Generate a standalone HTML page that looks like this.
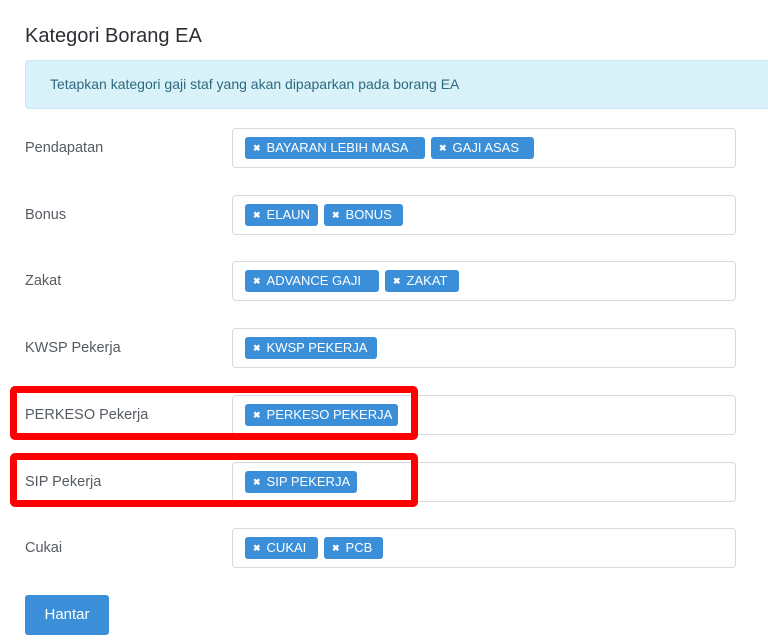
<!DOCTYPE html>
<html><head><style>
body{margin:0;width:768px;height:644px;background:#fff;font-family:"Liberation Sans",sans-serif;position:relative;overflow:hidden}
.t{position:absolute;left:25px;top:25px;font-size:20px;color:#2b2f33}
.al{position:absolute;left:25px;top:60px;width:760px;height:49px;background:#d9f1f8;border:1px solid #c6e9f3;border-radius:4px;box-sizing:border-box}
.al span{position:absolute;left:24px;top:15px;font-size:14px;color:#2d6a80}
.lb{position:absolute;left:25px;font-size:14.5px;color:#555b61}
.in{position:absolute;left:232px;width:504px;height:40px;border:1px solid #d6dadf;border-radius:4px;box-sizing:border-box;background:#fff}
.tg{position:absolute;top:8px;height:22px;background:#3a8fd8;color:#fff;border-radius:3px;font-size:13px;line-height:22px;box-sizing:border-box;padding-left:8px;white-space:nowrap;overflow:hidden}
.tg b{font-size:9px;margin-right:6px;position:relative;top:-1px}
.r{position:absolute;left:10px;width:408px;height:54px;border:7px solid #f00;border-radius:5px;box-sizing:border-box}
.btn{position:absolute;left:25px;top:595px;width:84px;height:40px;background:#3a8fd8;color:#fff;font-size:15px;text-align:center;line-height:40px;border-radius:3px}
</style></head><body>
<div class="t">Kategori Borang EA</div>
<div class="al"><span>Tetapkan kategori gaji staf yang akan dipaparkan pada borang EA</span></div>

<div class="lb" style="top:140px">Pendapatan</div>
<div class="in" style="top:128px"><div class="tg" style="left:12px;width:180px"><b>✖</b>BAYARAN LEBIH MASA</div><div class="tg" style="left:198px;width:103px"><b>✖</b>GAJI ASAS</div></div>

<div class="lb" style="top:207px">Bonus</div>
<div class="in" style="top:195px"><div class="tg" style="left:12px;width:73px"><b>✖</b>ELAUN</div><div class="tg" style="left:91px;width:79px"><b>✖</b>BONUS</div></div>

<div class="lb" style="top:273px">Zakat</div>
<div class="in" style="top:261px"><div class="tg" style="left:12px;width:134px"><b>✖</b>ADVANCE GAJI</div><div class="tg" style="left:152px;width:74px"><b>✖</b>ZAKAT</div></div>

<div class="lb" style="top:340px">KWSP Pekerja</div>
<div class="in" style="top:328px"><div class="tg" style="left:12px;width:132px"><b>✖</b>KWSP PEKERJA</div></div>

<div class="lb" style="top:407px">PERKESO Pekerja</div>
<div class="in" style="top:395px"><div class="tg" style="left:12px;width:153px"><b>✖</b>PERKESO PEKERJA</div></div>

<div class="lb" style="top:474px">SIP Pekerja</div>
<div class="in" style="top:462px"><div class="tg" style="left:12px;width:112px"><b>✖</b>SIP PEKERJA</div></div>

<div class="lb" style="top:540px">Cukai</div>
<div class="in" style="top:528px"><div class="tg" style="left:12px;width:73px"><b>✖</b>CUKAI</div><div class="tg" style="left:91px;width:59px"><b>✖</b>PCB</div></div>

<div class="r" style="top:386px"></div>
<div class="r" style="top:453px"></div>
<div class="btn">Hantar</div>
</body></html>
